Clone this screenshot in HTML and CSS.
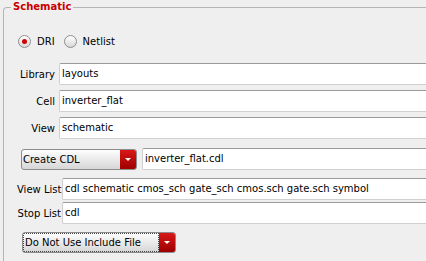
FILE: index.html
```html
<!DOCTYPE html>
<html lang="en">
<head>
    <meta charset="UTF-8">
    <title>Schematic</title>
    <link rel="stylesheet" href="styles.css">
</head>
<body>
    <fieldset class="group">
        <legend class="group-title">Schematic</legend>

        <div class="source">
            <label class="radio"><span class="radio-mark checked"></span>DRI</label>
            <label class="radio"><span class="radio-mark"></span>Netlist</label>
        </div>

        <div class="form">
            <div class="row"><span class="row-label">Library</span><div class="field">layouts</div></div>
            <div class="row"><span class="row-label">Cell</span><div class="field">inverter_flat</div></div>
            <div class="row"><span class="row-label">View</span><div class="field">schematic</div></div>
        </div>

        <div class="output-row">
            <div class="combo combo-cdl">
                <span class="combo-text">Create CDL</span>
                <span class="combo-button"></span>
            </div>
            <div class="field">inverter_flat.cdl</div>
        </div>

        <div class="form form-lists">
            <div class="row"><span class="row-label">View List</span><div class="field">cdl schematic cmos_sch gate_sch cmos.sch gate.sch symbol</div></div>
            <div class="row"><span class="row-label">Stop List</span><div class="field">cdl</div></div>
        </div>

        <div class="combo combo-include">
            <span class="combo-text focused">Do Not Use Include File</span>
            <span class="combo-button"></span>
        </div>
    </fieldset>
</body>
</html>
```

FILE: styles.css
```css
body {
    margin: 0;
    height: 261px;
    overflow: hidden;
    background: #efefef;
    color: #000;
    font-family: "DejaVu Sans", sans-serif;
    font-size: 10px;
}

/* the group box continues past the window, so no right/bottom edge */
.group {
    margin: 0 0 0 3px;
    padding: 0;
    height: 261px;
    box-sizing: border-box;
    border: 1px solid #b5b5b5;
    border-right: none;
    border-bottom: none;
    border-radius: 4px 0 0 0;
}

.group-title {
    margin-left: 7px;
    padding: 0 2px;
    color: #c80000;
    font-weight: bold;
    line-height: 14px;
}

/* radio buttons */
.source {
    display: flex;
    align-items: center;
    height: 13px;
    margin: 21px 0 0 14px;
}

.radio {
    display: flex;
    align-items: center;
    margin-right: 9px;
}

.radio-mark {
    display: flex;
    align-items: center;
    justify-content: center;
    width: 13px;
    height: 13px;
    box-sizing: border-box;
    margin-right: 6px;
    border: 1px solid #8e8e8e;
    border-radius: 50%;
    background: linear-gradient(#ffffff, #d8d8d8);
}

.radio-mark.checked::after {
    content: "";
    width: 5px;
    height: 5px;
    border-radius: 50%;
    background: #d00000;
}

/* label + field rows */
.form {
    display: flex;
    flex-direction: column;
    gap: 5px;
    margin: 15px 0 0 14px;
}

.row {
    display: flex;
    align-items: center;
    height: 22px;
}

.row-label {
    width: 37px;
    margin-right: 4px;
    text-align: right;
    white-space: nowrap;
}

.field {
    flex: 1;
    min-width: 0;
    height: 22px;
    box-sizing: border-box;
    padding: 0 2px;
    border: 1px solid #d0d0d0;
    border-top-color: #9a9a9a;
    border-right: none;
    border-radius: 2px 0 0 2px;
    background: #fff;
    line-height: 20px;
    white-space: nowrap;
    overflow: hidden;
}

.form-lists {
    gap: 2px;
    margin: 8px 0 0 13px;
}

.form-lists .row-label {
    width: 44px;
    margin-right: 1px;
}

.output-row {
    display: flex;
    align-items: center;
    gap: 5px;
    height: 22px;
    margin: 9px 0 0 17px;
}

/* combo boxes */
.combo {
    display: flex;
    flex-shrink: 0;
    height: 21px;
    box-sizing: border-box;
    border: 1px solid #8c8c8c;
    border-radius: 3px;
    background: linear-gradient(#fefefe, #d6d6d6);
    overflow: hidden;
}

.combo-cdl {
    width: 116px;
}

.combo-include {
    width: 154px;
    margin: 8px 0 0 18px;
}

.combo-text {
    flex: 1;
    padding-left: 1px;
    line-height: 19px;
    white-space: nowrap;
}

.combo-text.focused {
    padding-left: 2px;
    outline: 1px dotted #444;
    outline-offset: -1px;
}

.combo-button {
    display: flex;
    align-items: center;
    justify-content: center;
    width: 16px;
    background: linear-gradient(#d81818, #9e0000);
}

.combo-button::after {
    content: "";
    border-left: 3px solid transparent;
    border-right: 3px solid transparent;
    border-top: 3px solid #fff;
}
```
